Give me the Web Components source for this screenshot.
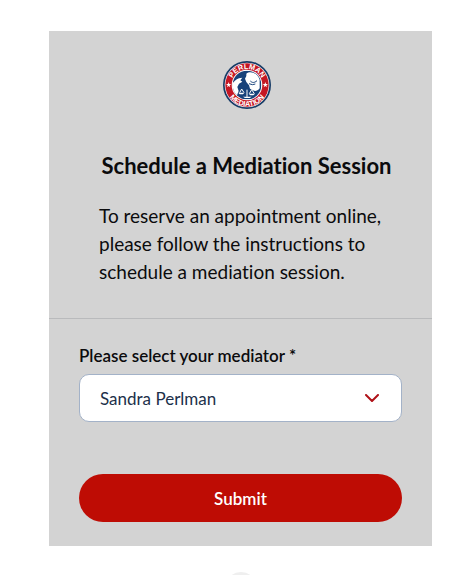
<!DOCTYPE html>
<html lang="en">
<head>
<meta charset="utf-8">
<meta name="viewport" content="width=device-width, initial-scale=1">
<title>Perlman Mediation</title>
<style>
    body {
        margin: 0;
        background: #fff;
        color: #0b0b0d;
        font-family: Lato, "Open Sans", sans-serif;
        font-variant-ligatures: none;
    }
</style>
</head>
<body>
<booking-card>
    <card-intro>
        <brand-logo slot="logo"></brand-logo>
        <span slot="title">Schedule a Mediation Session</span>
        To reserve an appointment online, please follow the instructions to schedule a mediation session.
    </card-intro>
    <mediator-form></mediator-form>
</booking-card>
<page-handle></page-handle>

<script>
class BookingCard extends HTMLElement {
    constructor() {
        super();
        this.attachShadow({ mode: 'open' });
    }

    connectedCallback() {
        this.shadowRoot.innerHTML = /*html*/`
        <style>
            :host {
                display: block;
                margin: 31px 42px 0 49px;
                background: #d3d3d3;
            }
        </style>
        <slot></slot>
        `;
    }
}

class CardIntro extends HTMLElement {
    constructor() {
        super();
        this.attachShadow({ mode: 'open' });
    }

    connectedCallback() {
        this.shadowRoot.innerHTML = /*html*/`
        <style>
            :host {
                display: block;
                padding: 30px 38px 32px 50px;
                border-bottom: 1px solid #b9babc;
            }
            .logo {
                display: flex;
                justify-content: center;
            }
            h1 {
                margin: 41px 0 20px;
                font-size: 22px;
                line-height: 32px;
                font-weight: 700;
                text-align: center;
            }
            p {
                margin: 0;
                font-size: 19px;
                line-height: 28px;
            }
        </style>
        <div class="logo"><slot name="logo"></slot></div>
        <h1><slot name="title"></slot></h1>
        <p><slot></slot></p>
        `;
    }
}

class BrandLogo extends HTMLElement {
    constructor() {
        super();
        this.attachShadow({ mode: 'open' });
    }

    connectedCallback() {
        this.shadowRoot.innerHTML = /*html*/`
        <style>
            :host {
                display: block;
            }
            svg {
                display: block;
                width: 48px;
                height: 48px;
            }
            text {
                font-family: "Liberation Sans", sans-serif;
                font-size: 22px;
                font-weight: 700;
                fill: #fff;
            }
        </style>
        <svg viewBox="0 0 144 144" role="img" aria-label="Perlman Mediation">
            <defs>
                <path id="top" d="M24 72a48 48 0 0 1 96 0"/>
                <path id="bottom" d="M8 72a64 64 0 0 0 128 0"/>
                <clipPath id="inner"><circle cx="72" cy="72" r="43"/></clipPath>
            </defs>
            <circle cx="72" cy="72" r="72" fill="#173b66"/>
            <circle cx="72" cy="72" r="67" fill="#f2f2f5"/>
            <circle cx="72" cy="72" r="65" fill="#c41724"/>
            <circle cx="72" cy="72" r="46" fill="#fff"/>
            <g clip-path="url(#inner)">
                <rect x="29" y="29" width="86" height="86" fill="#17427a"/>
                <!-- dove -->
                <path fill="#fff" d="M70 38c12-10 34-2 40 18v26c-6 8-14 10-20 6l-9-5-3-10-8-10-4-10 4-8z"/>
                <path fill="#fff" d="M26 72c4-8 12-16 22-20l10-2-6 8 6 4-10 6-5 10 4 12-6 16-14-6z"/>
                <path fill="none" stroke="#17427a" stroke-width="3" d="M82 60c6 6 12 6 20-1M78 68l10 3 9-2"/>
                <!-- scales -->
                <path fill="none" stroke="#fff" stroke-width="3" d="M56 84l-6 11M56 84l7 11M72 86v22M86 86l-7 12M86 86l8 12"/>
                <path fill="#fff" d="M46 95h18l-4 5H50zM77 98h19l-5 5h-9zM60 107h26l-6 4H66z"/>
            </g>
            <text text-anchor="middle"><textPath href="#top" startOffset="50%">PERLMAN</textPath></text>
            <text text-anchor="middle"><textPath href="#bottom" startOffset="50%">MEDIATION</textPath></text>
            <path id="star" fill="#fff" d="M17 63l2 6h6l-5 4 2 6-5-4-5 4 2-6-5-4h6z"/>
            <use href="#star" x="110"/>
        </svg>
        `;
    }
}

class MediatorForm extends HTMLElement {
    constructor() {
        super();
        this.attachShadow({ mode: 'open' });
    }

    connectedCallback() {
        this.render();
        this.elements();
        this.events();
    }

    render() {
        this.shadowRoot.innerHTML = /*html*/`
        <style>
            :host {
                display: block;
                padding: 25px 30px 24px;
            }
            form {
                display: flex;
                flex-direction: column;
            }
            label {
                margin-bottom: 6px;
                font-size: 17px;
                line-height: 24px;
                font-weight: 600;
            }
            .field {
                display: grid;
                align-items: center;
                margin-bottom: 52px;
            }
            select, svg {
                grid-area: 1 / 1;
            }
            select {
                appearance: none;
                box-sizing: border-box;
                width: 100%;
                height: 48px;
                padding: 0 48px 0 20px;
                border: 1px solid #a3b2c8;
                border-radius: 10px;
                background: #fff;
                color: #1c304a;
                font: inherit;
                font-size: 17px;
            }
            svg {
                justify-self: end;
                width: 14px;
                height: 8px;
                margin-right: 23px;
                pointer-events: none;
            }
            button {
                height: 48px;
                border: 0;
                border-radius: 24px;
                background: #be0c04;
                color: #fff;
                font: inherit;
                font-size: 17px;
                font-weight: 600;
                cursor: pointer;
            }
        </style>
        <form>
            <label for="mediator">Please select your mediator *</label>
            <div class="field">
                <select id="mediator" name="mediator" required>
                    <option>Sandra Perlman</option>
                </select>
                <svg viewBox="0 0 14 8" aria-hidden="true">
                    <path d="M1 1l6 6 6-6" fill="none" stroke="#b01218" stroke-width="2" stroke-linecap="round" stroke-linejoin="round"/>
                </svg>
            </div>
            <button type="submit">Submit</button>
        </form>
        `;
    }

    elements() {
        this.$form = this.shadowRoot.querySelector('form');
        this.$select = this.shadowRoot.querySelector('select');
    }

    events() {
        this.$form.addEventListener('submit', (e) => {
            e.preventDefault();
            this.dispatchEvent(new CustomEvent('mediator-selected', {
                bubbles: true,
                detail: this.$select.value
            }));
        });
    }
}

// Top edge of the round handle under the card
class PageHandle extends HTMLElement {
    constructor() {
        super();
        this.attachShadow({ mode: 'open' });
    }

    connectedCallback() {
        this.shadowRoot.innerHTML = /*html*/`
        <style>
            :host {
                display: flex;
                justify-content: center;
                height: 3px;
                margin: 26px 42px 0 49px;
                overflow: hidden;
            }
            span {
                flex: none;
                width: 32px;
                height: 32px;
                border-radius: 50%;
                background: #efefef;
            }
        </style>
        <span></span>
        `;
    }
}

window.customElements.define('booking-card', BookingCard);
window.customElements.define('card-intro', CardIntro);
window.customElements.define('brand-logo', BrandLogo);
window.customElements.define('mediator-form', MediatorForm);
window.customElements.define('page-handle', PageHandle);
</script>
</body>
</html>
